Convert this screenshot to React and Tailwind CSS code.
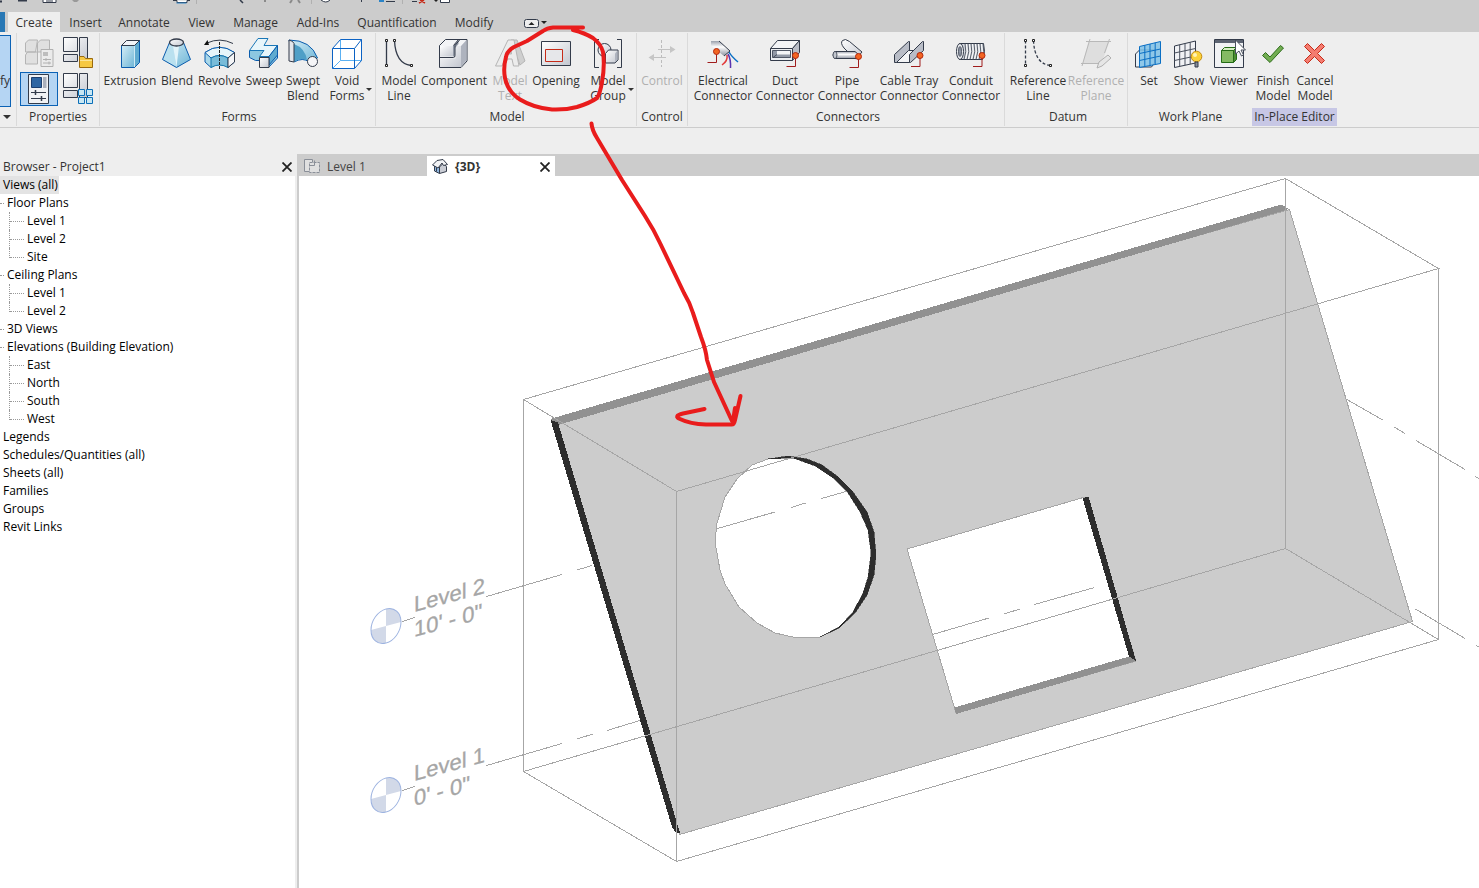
import React from 'react';

const Icon = ({ children, className = 'w-8 h-8' }) => (
    <svg viewBox="0 0 32 32" className={`${className} shrink-0 overflow-visible`} fill="none" strokeLinejoin="round" aria-hidden="true">
        {children}
    </svg>
);

const Gradients = () => (
    <svg className="absolute w-0 h-0" aria-hidden="true">
        <defs>
            <linearGradient id="blue" x1="0" y1="0" x2="1" y2="1">
                <stop offset="0" stopColor="#d6eef7" />
                <stop offset="1" stopColor="#6db5d6" />
            </linearGradient>
            <linearGradient id="steel" x1="0" y1="0" x2="1" y2="1">
                <stop offset="0" stopColor="#ffffff" />
                <stop offset="1" stopColor="#c3c7d0" />
            </linearGradient>
            <linearGradient id="pipe" x1="0" y1="0" x2="0" y2="1">
                <stop offset="0" stopColor="#9aa0ac" />
                <stop offset="0.4" stopColor="#ffffff" />
                <stop offset="1" stopColor="#8c929f" />
            </linearGradient>
        </defs>
    </svg>
);

const Extrusion = () => (
    <Icon>
        <path d="M7.500 7.500h13v22h-13z" fill="url(#blue)" stroke="#0b5cad" />
        <path d="M20.500 7.500l5-5v22l-5 5z" fill="#5fabd0" stroke="#0b5cad" />
        <path d="M7.500 7.500l5-5h13l-5 5z" fill="#f2f4f7" stroke="#333b4a" />
        <path d="M20.500 8v21" stroke="#cdeaf5" />
    </Icon>
);

const Blend = () => (
    <Icon>
        <path d="M8.500 4.500L1.500 21.500L15.500 29.500L29.500 21.500L22.500 4.500z" fill="url(#blue)" />
        <path d="M12 8L15.500 29L2 21.500L9 5z" fill="#b9e0ef" />
        <path d="M12 8L15.500 29L18 8z" fill="#e3f4fa" />
        <path d="M8.500 4.500L1.500 21.500L15.500 29.500L29.500 21.500L22.500 4.500" stroke="#0b5cad" />
        <ellipse cx="15.500" cy="4.500" rx="7" ry="3.500" fill="url(#steel)" stroke="#333b4a" strokeWidth="1.300" />
    </Icon>
);

const Revolve = () => (
    <Icon>
        <path d="M1 14.500Q15.500 4 30.500 14.500V24l-6.500 5.500q-3-3-8.500-3t-8.500 3L1 24z" fill="#a9d8ea" stroke="#0b5cad" />
        <path d="M1 14.500Q15.500 4 30.500 14.500L24 20q-8.500-5-17 0z" fill="#e6f5fa" stroke="#0b5cad" />
        <path d="M7 20q8.500-5 17 0v9.500q-8.500-5-17 0z" fill="#78bcd9" stroke="#1579ae" />
        <path d="M24 20l6.500-5.500V24L24 29.500z" fill="#f4f5f7" stroke="#333b4a" />
        <path d="M29 5.500Q16-1 3 5" stroke="#333b4a" />
        <path d="M0 7l3.500-5L5 7z" fill="#111" />
        <path d="M15.500 4v27" stroke="#222" strokeDasharray="3 1" />
    </Icon>
);

const Sweep = () => (
    <Icon>
        <path d="M1.500 12.500v7l6 3h5V29H21l8.500-9V8.500z" fill="#8cc8e0" stroke="#0b5cad" />
        <path d="M1.500 12.500L10 .5h10l-4 7h13.500L21 18.500h-9.500l4.500-6z" fill="#e8f6fb" stroke="#1a77b7" />
        <path d="M21 18.500l8.500-11v9.500L21 27z" fill="#5fabd0" stroke="#0b5cad" />
        <path d="M11.500 19.500H21v10h-9.500z" fill="url(#steel)" stroke="#333b4a" />
    </Icon>
);

const SweptBlend = () => (
    <Icon>
        <path d="M2 2Q24 2 30.500 20L22 24Q16 19 7 24z" fill="url(#blue)" stroke="#0b5cad" />
        <path d="M7 6Q18 10 20 22Q14 19 7 24z" fill="#4f9fc7" />
        <path d="M2 2q6 2 5 5v17l-5-1z" fill="#e4e6eb" stroke="#333b4a" />
        <circle cx="25.500" cy="23.500" r="5" fill="#f5f5f7" stroke="#333b4a" />
    </Icon>
);

const VoidForms = () => (
    <Icon>
        <path d="M9.500 1.500h21v21l-6.500 8H1.500v-20z" fill="#fff" />
        <path d="M9.500 2v20.500h21M9.500 22.500l-8 8" stroke="#5ab0f2" />
        <path d="M1.500 10.500h22v20h-22zM1.500 10.500l8-9h21l-7 9M30.500 1.500v21l-7 8" stroke="#0b62c4" />
    </Icon>
);

const ModelLine = ({ dash }) => (
    <Icon>
        <path d="M3.500 2.500v25M11.500 2.500q1 23 16.500 25" stroke="#333b4a" strokeWidth="1.300" strokeDasharray={dash} />
        {[[3.5, 2.5], [3.5, 27.5], [11.5, 2.5], [28.5, 27.5]].map(([x, y]) => (
            <rect key={`${x}-${y}`} x={x - 1} y={y - 1} width="2" height="2" fill="#fff" stroke="#222" />
        ))}
    </Icon>
);

const Component = () => (
    <Icon>
        <path d="M1.500 7.500l6-6h21.500V23l-6 6.500H1.500z" fill="#f3f4f6" stroke="#333b4a" />
        <path d="M2 8h13v10.500H2z" fill="url(#steel)" />
        <path d="M2 20.500h15.500V8H23v21H2z" fill="url(#steel)" />
        <path d="M23 8l5.500-6v20.500L23 29z" fill="#aeb3be" />
        <path d="M15 8l5.500-6v4L17 10v8.500h-2z" fill="#9299a6" />
        <path d="M1.500 19.500H15.500q1.500 0 1.500-2V7.500L22 1.500M15.500 7.500l5-6" stroke="#333b4a" />
    </Icon>
);

const ModelText = () => (
    <Icon>
        <path d="M17 2h6l8 21-5 4-3-8-8-1-4 8-2-1z" fill="#cfcfcf" stroke="#b5b5b5" />
        <path d="M1.500 28L14 2h6l5 26h-5.500l-1.500-7h-7l-3 7zM13.500 16h4l-1-7z" fill="#ececec" stroke="#b5b5b5" />
    </Icon>
);

const Opening = () => (
    <Icon>
        <rect x="1.500" y="3.500" width="29" height="24" fill="url(#steel)" stroke="#333b4a" />
        <rect x="5.500" y="11.500" width="17" height="12" fill="#e6e7ea" stroke="#c62a18" />
    </Icon>
);

const ModelGroup = () => (
    <Icon>
        <path d="M7 1.500H2.500v28H7M25 1.500h4.500v28H25" stroke="#333b4a" />
        <circle cx="12.500" cy="12" r="6.500" fill="url(#steel)" stroke="#333b4a" />
        <path d="M13.500 15.500l3-3.500h9.500v10l-3 3h-9.500z" fill="url(#steel)" stroke="#333b4a" />
        <path d="M23 15.500l2.500-3v9.500L23 24.500z" fill="#aeb3be" />
    </Icon>
);

const Control = () => (
    <Icon>
        <path d="M15.500 2v27" stroke="#bcbcbc" strokeDasharray="3 2" />
        <path d="M12 11.500h13M20 19.500H6" stroke="#c2c2c2" />
        <path d="M24 8v7l5.500-3.500zM8 16v7l-5.500-3.500z" fill="#c6c6c6" />
    </Icon>
);

const Node = ({ x, y }) => (
    <>
        <path d={`M${x} ${y}v11h-9`} stroke="#a01c1c" />
        <circle cx={x} cy={y} r="3" fill="#f26522" stroke="#b3270e" />
    </>
);

const Electrical = () => (
    <Icon>
        <path d="M20 17q1 6-5 10" stroke="#e23a3a" strokeWidth="1.500" />
        <path d="M21 16q3 5 2.500 14" stroke="#5a35b0" strokeWidth="1.500" />
        <path d="M22 14q2 4 9 10" stroke="#0b6fc4" strokeWidth="1.500" />
        <path d="M4 3h8l11 10-6 5L4 7.500z" fill="url(#pipe)" />
        <path d="M12 3l11 10-6 5" stroke="#333b4a" />
        <Node x={9.5} y={13.5} />
    </Icon>
);

const Duct = () => (
    <Icon>
        <path d="M1.500 10.500l7-8h22l-7 8z" fill="#f3f4f6" stroke="#333b4a" />
        <path d="M23.500 10.500l7-8v12l-7 8z" fill="#b9bdc7" stroke="#333b4a" />
        <path d="M1.500 10.500h22v12h-22z" fill="#eceef1" stroke="#333b4a" />
        <path d="M3.500 12.500h18v7h-18z" fill="#9299a6" stroke="#333b4a" strokeWidth="0.800" />
        <path d="M8 13h13v3.500H8z" fill="#f4f5f7" />
        <path d="M4 19.500l4-3" stroke="#333b4a" strokeWidth="0.800" />
        <Node x={26.5} y={17.5} />
    </Icon>
);

const Pipe = () => (
    <Icon>
        <path d="M13 10q-4-5-1.500-7.500t7 1L31 14l-6 7-9-8z" fill="url(#steel)" stroke="#333b4a" />
        <path d="M3.500 13.500H24l4 3.500-3 3.500H3.500q-3-3.500 0-7z" fill="url(#pipe)" stroke="#333b4a" />
        <ellipse cx="4" cy="17" rx="2" ry="3.500" fill="#c3c7cf" stroke="#333b4a" strokeWidth="0.800" />
        <Node x={27.5} y={18.5} />
    </Icon>
);

const CableTray = () => (
    <Icon>
        <path d="M1.500 16.500l14-13h1v9l-13 12h-2z" fill="#b9bdc7" stroke="#333b4a" />
        <path d="M3.500 24.500l12-12h7l-6 12z" fill="#f3f4f6" stroke="#333b4a" />
        <path d="M16.500 16.500l13-13h1v9l-13 12h-1z" fill="#b9bdc7" stroke="#333b4a" />
        <Node x={27} y={17.5} />
    </Icon>
);

const Conduit = () => (
    <Icon>
        <path d="M4.500 5.500h24q2.500 8-1 16h-23z" fill="#d5d8df" stroke="#333b4a" />
        {[10, 13, 16, 19, 22, 25, 28].map((x) => (
            <path key={x} d={`M${x} 5.500q2 8-1 16`} stroke="#4a515e" strokeWidth="0.900" />
        ))}
        {[11.5, 14.5, 17.5, 20.5, 23.5, 26.5].map((x) => (
            <path key={x} d={`M${x} 6q2 8-1 15`} stroke="#ffffff" strokeWidth="0.900" />
        ))}
        <ellipse cx="5" cy="13.500" rx="3.500" ry="8" fill="#eceef1" stroke="#333b4a" />
        <ellipse cx="5" cy="13.500" rx="1.500" ry="5" fill="#9299a6" stroke="#333b4a" strokeWidth="0.800" />
        <Node x={27} y={17.5} />
    </Icon>
);

const ReferencePlane = () => (
    <Icon>
        <path d="M8.500 3.500h21l-8 22h-19z" fill="#dedede" />
        <path d="M6 3.500h25M1 25.500h18M10 1L2 28M29.500 1l-5 14" stroke="#b8b8b8" />
        <path d="M17 30l2-6 9-7 3 3-9 8z" fill="#e6e6e6" stroke="#b0b0b0" />
    </Icon>
);

const SetPlane = () => (
    <Icon>
        <path d="M2.500 16l4-4h15v13l-3 4h-16z" fill="#e8f0f6" stroke="#333b4a" />
        <path d="M6.500 8.500l21-5v22l-21 4z" fill="#7fc1e6" fillOpacity="0.85" stroke="#0b6fc4" />
        <path d="M11.800 7.200v21.300M17 6v21.500M22.200 4.800v21.600M6.500 15.500l21-4.500M6.500 22.500l21-4.500" stroke="#0b6fc4" />
    </Icon>
);

const ShowPlane = () => (
    <Icon>
        <path d="M1.500 8l21-5v22l-21 4.500z" fill="#f0f1f4" stroke="#333b4a" />
        <path d="M6.700 6.800v21.500M12 5.500v21.700M17.200 4.200v21.900M1.500 15l21-4.500M1.500 22.500l21-4.500" stroke="#4a515e" />
        <circle cx="23.500" cy="18.500" r="5.300" fill="#fbd23a" stroke="#c58a10" />
        <circle cx="22" cy="17" r="2" fill="#fff3b8" />
        <path d="M22 24h3v5h-3z" fill="#8a8f9a" stroke="#333b4a" />
    </Icon>
);

const Viewer = () => (
    <Icon>
        <rect x="1.500" y="1.500" width="29" height="28" fill="#f1f2f4" stroke="#333b4a" />
        <path d="M2 2h28v3H2z" fill="#5d6472" />
        <path d="M8.500 12.500l3-3h12l-3 3z" fill="#d7efc4" stroke="#246b16" />
        <path d="M20.500 12.500l3-3v12l-3 3z" fill="#4c8c33" stroke="#246b16" />
        <path d="M8.500 12.500h12v12h-12z" fill="#84bb63" stroke="#246b16" />
        <path d="M22.500 2v14l3.500-3 2.500 5 2-1-2.500-5h4.500z" fill="#fff" stroke="#4a515e" />
    </Icon>
);

const Finish = () => (
    <Icon>
        <path d="M5.500 17.500l3-3 4.500 4.500L23.500 7.500l3 2.500L13 24.500z" fill="#72ad52" stroke="#2f6d1c" />
    </Icon>
);

const Cancel = () => (
    <Icon>
        <path d="M5.500 8.500l3-3 7 7 7-7 3 3-7 7 7 7-3 3-7-7-7 7-3-3 7-7z" fill="#f47c70" stroke="#c62a18" />
    </Icon>
);

const Panes = () => (
    <path d="M1.500 .5h14v14h-14zM17.500 .5h8v24h-8zM1.500 17.500h14v7h-14z" fill="url(#steel)" stroke="#333b4a" />
);

const TypeProperties = () => (
    <Icon>
        <path d="M2.500 6l3-3h9l-2 12H2.500zM14.500 6l3-3h9v12h-12zM2.500 18l2-3h10v12H2.500z" fill="#e0e0e0" stroke="#b4b4b4" />
        <path d="M18 12.500h12v17H18z" fill="#ebebeb" stroke="#b0b0b0" />
        <path d="M20 15h5v4h-5z" fill="#bdbdbd" />
        <path d="M20 22.500h8M20 26h8M23 21v3M26 24.500v3" stroke="#b0b0b0" />
    </Icon>
);

const FamilyCategory = () => (
    <Icon>
        <Panes />
        <path d="M17.500 19.500H22l1.500 2h7v9h-13z" fill="#f6c843" stroke="#9a6a0e" />
        <path d="M18 23.500h12" stroke="#fbe49a" />
    </Icon>
);

const PropertiesIcon = () => (
    <Icon>
        <path d="M5.500 1.500h20v29h-20z" fill="#f1f2f4" stroke="#333b4a" />
        <path d="M8.500 4.500h10v10h-10z" fill="#2f66a3" stroke="#1c3f70" />
        <path d="M20 4h3.500v11H20z" fill="#aab0bc" />
        <path d="M8 19.500h15M8 25.500h15" stroke="#333b4a" />
        <path d="M12.500 17v5M18.500 23v5" stroke="#333b4a" strokeWidth="1.500" />
    </Icon>
);

const FamilyTypes = () => (
    <Icon>
        <Panes />
        <path d="M16.500 16.500h6v6h-6zM24.500 16.500h6v6h-6zM16.500 24.500h6v6h-6zM24.500 24.500h6v6h-6z" fill="#c9e7f3" stroke="#0b6fb8" />
    </Icon>
);

const panels = [
    {
        title: 'Forms', className: 'w-[276px] pl-[3px]',
        tools: [
            { label: ['Extrusion'], icon: Extrusion, width: 'w-[54px]' },
            { label: ['Blend'], icon: Blend, width: 'w-[40px]' },
            { label: ['Revolve'], icon: Revolve, width: 'w-[45px]' },
            { label: ['Sweep'], icon: Sweep, width: 'w-[44px]' },
            { label: ['Swept', 'Blend'], icon: SweptBlend, width: 'w-[34px]' },
            { label: ['Void', 'Forms'], icon: VoidForms, width: 'w-[54px]', menu: true },
        ],
    },
    {
        title: 'Model', className: 'w-[261px] pl-[2px]',
        tools: [
            { label: ['Model', 'Line'], icon: ModelLine, width: 'w-[42px]' },
            { label: ['Component'], icon: Component, width: 'w-[68px]' },
            { label: ['Model', 'Text'], icon: ModelText, width: 'w-[44px]', disabled: true },
            { label: ['Opening'], icon: Opening, width: 'w-[48px]' },
            { label: ['Model', 'Group'], icon: ModelGroup, width: 'w-[56px]', menu: true },
        ],
    },
    {
        title: 'Control', className: 'w-[51px]',
        tools: [{ label: ['Control'], icon: Control, width: 'w-[50px]', disabled: true }],
    },
    {
        title: 'Connectors', className: 'w-[317px] pl-1',
        tools: [
            { label: ['Electrical', 'Connector'], icon: Electrical, width: 'w-[62px]' },
            { label: ['Duct', 'Connector'], icon: Duct, width: 'w-[62px]' },
            { label: ['Pipe', 'Connector'], icon: Pipe, width: 'w-[62px]' },
            { label: ['Cable Tray', 'Connector'], icon: CableTray, width: 'w-[62px]' },
            { label: ['Conduit', 'Connector'], icon: Conduit, width: 'w-[62px]' },
        ],
    },
    {
        title: 'Datum', className: 'w-[123px] pl-1',
        tools: [
            { label: ['Reference', 'Line'], icon: () => <ModelLine dash="3 2" />, width: 'w-[58px]' },
            { label: ['Reference', 'Plane'], icon: ReferencePlane, width: 'w-[58px]', disabled: true },
        ],
    },
    {
        title: 'Work Plane', className: 'w-[124px] pl-px border-r-0',
        tools: [
            { label: ['Set'], icon: SetPlane, width: 'w-[40px]' },
            { label: ['Show'], icon: ShowPlane, width: 'w-[40px]' },
            { label: ['Viewer'], icon: Viewer, width: 'w-[40px]' },
        ],
    },
    {
        title: 'In-Place Editor', className: 'w-[85px] border-r-0', highlight: true,
        tools: [
            { label: ['Finish', 'Model'], icon: Finish, width: 'w-[42px]' },
            { label: ['Cancel', 'Model'], icon: Cancel, width: 'w-[42px]' },
        ],
    },
];

const ToolButton = ({ label, icon: ToolIcon, width, disabled, menu }) => (
    <button type="button" disabled={disabled} className={`relative flex flex-col items-center gap-[3px] ${width} ${disabled ? 'text-[#b0b0b0]' : ''}`}>
        <ToolIcon />
        <span className="flex flex-col items-center leading-[15px] whitespace-nowrap">
            {label.map((line) => <span key={line}>{line}</span>)}
        </span>
        {menu && <span className="absolute right-[2px] bottom-3 border-x-[3px] border-t-[3px] border-x-transparent border-t-[#333]" />}
    </button>
);

const Panel = ({ title, className, tools, highlight }) => (
    <section className={`flex flex-col shrink-0 border-r border-[#dadada] ${className}`}>
        <div className="flex items-start h-[75px] pt-[5px]">
            {tools.map((tool) => <ToolButton key={tool.label.join(' ')} {...tool} />)}
        </div>
        <h2 className={`h-[18px] leading-[18px] text-center whitespace-nowrap ${highlight ? 'bg-[#c7c7e5]' : ''}`}>{title}</h2>
    </section>
);

const ribbonTabs = [
    { name: 'Create', width: 'w-[52px]' },
    { name: 'Insert', width: 'w-[51px]' },
    { name: 'Annotate', width: 'w-[66px]' },
    { name: 'View', width: 'w-[49px]' },
    { name: 'Manage', width: 'w-[59px]' },
    { name: 'Add-Ins', width: 'w-[66px]' },
    { name: 'Quantification', width: 'w-[92px]' },
    { name: 'Modify', width: 'w-[62px]' },
];

const QuickAccess = () => (
    <div className="h-3 overflow-hidden">
        <svg width="460" height="4" aria-hidden="true">
            <path d="M0 1.500h2M18 .5h9" stroke="#333b4a" strokeWidth="2" />
            <path d="M43 0v2.500h13V0M46 1h7" fill="#fff" stroke="#333b4a" />
            <path d="M72 0h7l-2 2h-3z" fill="#999" />
            <path d="M173 .5h4v2h10v-2h3" fill="#fff" stroke="#333b4a" />
            <path d="M176.500 3h10" stroke="#2a84c8" />
            <path d="M196.500 0v4M311.500 0v4M402.500 0v4" stroke="#b0b0b0" />
            <path d="M240 0l3 3" stroke="#333b4a" strokeWidth="1.500" />
            <path d="M265 0v2M290 3l2-3M300 3l-2-3" stroke="#8a8a8a" strokeWidth="2" />
            <path d="M321 0q5 4 9 0" fill="#fff" stroke="#333b4a" />
            <path d="M361.500 0v2" stroke="#333b4a" />
            <path d="M379 1h5" stroke="#2a84c8" strokeWidth="2" />
            <path d="M386 1.500h9M412 1.500h5" stroke="#333b4a" />
            <path d="M419 3l5-3M420 0l5 3" stroke="#c62a18" strokeWidth="1.500" />
            <path d="M434 0h4l-2 2z" fill="#222" />
            <path d="M440.500 0v2.500h9V0" fill="#fff" stroke="#333b4a" />
        </svg>
    </div>
);

const RibbonTabs = () => (
    <nav className="flex h-5 leading-5 text-center">
        <button type="button" aria-label="File" className="w-[5px] mr-[3px] bg-[#2878b5]" />
        {ribbonTabs.map(({ name, width }) => (
            <button key={name} type="button" className={`${width} pt-px whitespace-nowrap ${name === 'Create' ? 'bg-[#eee]' : ''}`}>
                {name}
            </button>
        ))}
        <button type="button" aria-label="Minimize ribbon" className="flex items-center gap-[2px] ml-[18px] pt-px">
            <svg width="16" height="10" fill="none" aria-hidden="true">
                <rect x="1.500" y="1.500" width="14" height="8" rx="2" fill="#eee" stroke="#333b4a" />
                <path d="M5.500 7l3-3 3 3z" fill="#222" />
            </svg>
            <span className="border-x-[3px] border-t-[3px] border-x-transparent border-t-[#222]" />
        </button>
    </nav>
);

const Ribbon = () => (
    <div className="flex h-24 pt-px pb-px border-b border-[#ccc] bg-[#eee] overflow-hidden">
        <section className="flex flex-col justify-between w-[17px] shrink-0 border-r border-[#dadada] pt-[2px]">
            <button type="button" aria-label="Modify" className="flex items-center w-[11px] h-[72px] pt-5 bg-[#b5d5f3] border border-l-0 border-[#0b62b5]">
                fy
            </button>
            <span className="self-start ml-[3px] mb-[7px] border-x-4 border-t-4 border-x-transparent border-t-[#333]" />
        </section>
        <section className="flex flex-col w-[83px] shrink-0 border-r border-[#dadada]">
            <div className="grid grid-cols-[38px_38px] grid-rows-[36px_34px] gap-px h-[75px] pl-[3px] pt-[2px]">
                <button type="button" disabled aria-label="Type Properties" className="flex items-center justify-center"><TypeProperties /></button>
                <button type="button" aria-label="Family Category and Parameters" className="flex items-center justify-center"><FamilyCategory /></button>
                <button type="button" aria-label="Properties" className="flex items-center justify-center bg-[#b5d5f3] border border-[#0b62b5]"><PropertiesIcon /></button>
                <button type="button" aria-label="Family Types" className="flex items-center justify-center"><FamilyTypes /></button>
            </div>
            <h2 className="h-[18px] leading-[18px] text-center">Properties</h2>
        </section>
        {panels.map((panel) => <Panel key={panel.title} {...panel} />)}
    </div>
);

const tree = [
    { name: 'Floor Plans', children: ['Level 1', 'Level 2', 'Site'] },
    { name: 'Ceiling Plans', children: ['Level 1', 'Level 2'] },
    { name: '3D Views', children: [] },
    { name: 'Elevations (Building Elevation)', children: ['East', 'North', 'South', 'West'] },
];

const CloseIcon = () => (
    <svg width="10" height="10" aria-hidden="true">
        <path d="M.5 .5l9 9M9.500 .5l-9 9" stroke="#222" strokeWidth="1.800" />
    </svg>
);

const ProjectBrowser = () => (
    <aside className="w-[299px] shrink-0 flex flex-col pt-[2px] bg-[#eee] border-r-2 border-[#ccc]">
        <div className="flex items-center justify-between h-5 pl-[3px] pr-[5px] pt-px">
            <h2>Browser - Project1</h2>
            <button type="button" aria-label="Close browser"><CloseIcon /></button>
        </div>
        <div className="flex-1 mr-[2px] bg-white leading-[18px] text-black">
            <div className="w-[59px] pl-[3px] bg-[#e3e3e3] whitespace-nowrap">Views (all)</div>
            <ul>
                {tree.map(({ name, children }) => (
                    <li key={name}>
                        <div className="flex items-center gap-[3px]">
                            <span className="w-1 border-t border-dotted border-[#999]" />
                            {name}
                        </div>
                        <ul className="ml-[9px]">
                            {children.map((child, i) => (
                                <li key={child} className="flex">
                                    <span className={`w-[15px] mr-[3px] border-l border-dotted border-[#999] ${i === children.length - 1 ? 'h-[10px]' : 'h-[18px]'}`}>
                                        <span className="block h-[10px] border-b border-dotted border-[#999]" />
                                    </span>
                                    {child}
                                </li>
                            ))}
                        </ul>
                    </li>
                ))}
            </ul>
            <ul className="pl-[3px]">
                {['Legends', 'Schedules/Quantities (all)', 'Sheets (all)', 'Families', 'Groups', 'Revit Links'].map((item) => (
                    <li key={item}>{item}</li>
                ))}
            </ul>
        </div>
    </aside>
);

const DocumentTabs = () => (
    <div className="flex h-[22px] pt-[3px] bg-[#ccc]">
        <button type="button" className="flex items-center gap-[7px] w-32 pl-[5px] text-[#444]">
            <svg width="16" height="16" fill="none" stroke="#8a8f98" aria-hidden="true">
                <path d="M5.500 12.500h-5v-12h8v3" fill="#e0e0e0" />
                <path d="M5.500 3.500h10v10h-10z" fill="#e0e0e0" strokeDasharray="3 1" />
                <path d="M10.500 1.500v5M5.500 6.500h5" />
            </svg>
            Level 1
        </button>
        <div className="flex items-center w-32 -mt-px pt-px pl-[5px] pr-[5px] bg-white">
            <button type="button" className="flex flex-1 items-center gap-[7px] font-bold">
                <svg width="16" height="16" fill="none" stroke="#333b4a" strokeLinejoin="round" aria-hidden="true">
                    <path d="M2.500 6.500v5.500l5 2.500v-6z" fill="#8fb4dc" />
                    <path d="M7.500 8L11 4.500l3.500 3v5l-7 2z" fill="#c9ccd4" />
                    <path d="M.5 6L5 1.500l6-1 4.500 5-4 1L10 4 6 9z" fill="#f2f3f5" />
                    <path d="M4.500 8.500v4" />
                </svg>
                {'{3D}'}
            </button>
            <button type="button" aria-label="Close view"><CloseIcon /></button>
        </div>
    </div>
);

const LevelHead = ({ y, name, height }) => (
    <>
        <g transform={`translate(386 ${y}) skewY(-15)`}>
            <path d="M0 0V-17A15 17 0 0 1 15 0zM0 0V17A15 17 0 0 1-15 0z" fill="#d2d9e8" />
            <ellipse rx="15" ry="17" fill="none" stroke="#9db3e0" />
        </g>
        <g fill="#a6a6a6" stroke="#a6a6a6" strokeWidth="0.300" fontFamily="'Liberation Sans', Arial, sans-serif" fontSize="22">
            <text transform={`translate(414 ${y - 14}) skewY(-15)`}>{name}</text>
            <text transform={`translate(414 ${y + 11}) skewY(-15)`}>{height}</text>
        </g>
    </>
);

// Scene coordinates are window coordinates, so the markup layer can share them
const ModelView = () => (
    <svg viewBox="299 176 1180 712" preserveAspectRatio="xMinYMin slice" className="block flex-1 min-h-0 w-full bg-white" role="img" aria-label="3D view">
        <g shapeRendering="crispEdges" fill="none" stroke="#a6a6a6">
            <path
                fill="#ccc"
                fillRule="evenodd"
                d="M554 420L1289.500 209.500L1412.500 621.500L679.500 834.500z
                   M715 542L717 523L725 497L737 479L752 465L768 459L788 456L807 459L822 465L837 476L853 492L867 512L874 532L876 555L874 575L867 595L855 613L839 628L820 637L797 638L775 633L757 623L739 607L725 584L720 570z
                   M907 549L1085 497L1136 661L956 713z"
            />
            <path d="M550 419L1281 204.500L1289 209L558 425z" fill="#919191" stroke="none" />
            <path d="M550.500 420L558 422.500L680 833L676 833L672 827z" fill="#2d2d2d" stroke="none" />
            <path d="M768 459L788 456L807 459L822 465L837 476L853 492L867 512L874 532L876 555L874 575L867 595L855 613L839 628L820 637L839 627L853 612L863 593L868 577L871 553L868 530L860 512L848 493L833 478L815 466L793 458z" fill="#2d2d2d" stroke="#2d2d2d" strokeWidth="0.500" />
            <path d="M954.500 707.500L1129 656.500L1136 661L956 714z" fill="#919191" stroke="none" />
            <path d="M1082.500 498L1088.500 496.500L1136 661L1129 656.500z" fill="#2d2d2d" stroke="none" />
            {/* crop box */}
            <path d="M523.500 399.500L1285.500 178.500L1438.500 268.500L676.500 491.500zM523.500 771.500L1285.500 548.500L1438.500 639.500L676.500 861.500z" />
            <path d="M523.500 399.500v372M1285.500 178.500v370M1438.500 268.500v371M676.500 491.500v370" />
            {/* level lines */}
            <path d="M402 621.500l13-4M486.500 596.500L562 574.500M577 570L592 565.500M717.500 528.500L775 512M791 507.500l14.500-4.500M821.500 498.500L846 491.500" />
            <path d="M402 790.500l13-4M486.500 765.500L562 743.500M577 739L593 734M607 730.500L640 720.500M932.500 634.500L989 618M1004 614L1020 609M1034.500 604.500L1094.500 587.500" />
            <path d="M1347 399.500L1383.500 420.500M1394 427L1405 433.500M1416 440.500L1465 469.500M1475 476.500L1479 478.500M1415.500 609L1465 638.500M1476 645.500L1479 647" />
        </g>
        <LevelHead y={626} name="Level 2" height={'10\' - 0"'} />
        <LevelHead y={795} name="Level 1" height={'0\' - 0"'} />
    </svg>
);

const Markup = () => (
    <svg width="1479" height="888" className="absolute top-0 left-0 pointer-events-none" fill="none" stroke="#e91c1c" strokeWidth="4" strokeLinecap="round" strokeLinejoin="round" aria-hidden="true">
        <path d="M583 27.500H553Q547 28 543 31L527 41L514 47Q507 51 506 57Q503 68 505 78Q508 92 520 99.500Q534 108 552 109.500Q566 110 577 107Q590 103 597 98Q600 94 602 82Q605 66 603 52Q601 44 593 38Q585 33 573 30" />
        <path d="M591.500 123.500Q592 130 597 138L622 180L645 216Q654 230 660 243L684 293Q690 303 693 313L701 337Q706 350 707 360L714 382L732 421" />
        <path d="M704.500 409L683 413.500Q673 416 680 419Q690 424 706 424.500H731Q734 425 735 420L738 407L740.500 396M735 408L733 421M736 409L734 420" />
    </svg>
);

const App = () => {
    return (
        <div className="relative flex flex-col min-h-screen overflow-hidden bg-[#ccc] text-xs text-[#333] font-['Open_Sans',sans-serif]">
            <Gradients />
            <QuickAccess />
            <RibbonTabs />
            <Ribbon />
            <div className="h-[26px] bg-[#eee]" />
            <div className="flex flex-1">
                <ProjectBrowser />
                <main className="flex flex-col flex-1 min-w-0">
                    <DocumentTabs />
                    <ModelView />
                </main>
            </div>
            <Markup />
        </div>
    );
};

export default App;
